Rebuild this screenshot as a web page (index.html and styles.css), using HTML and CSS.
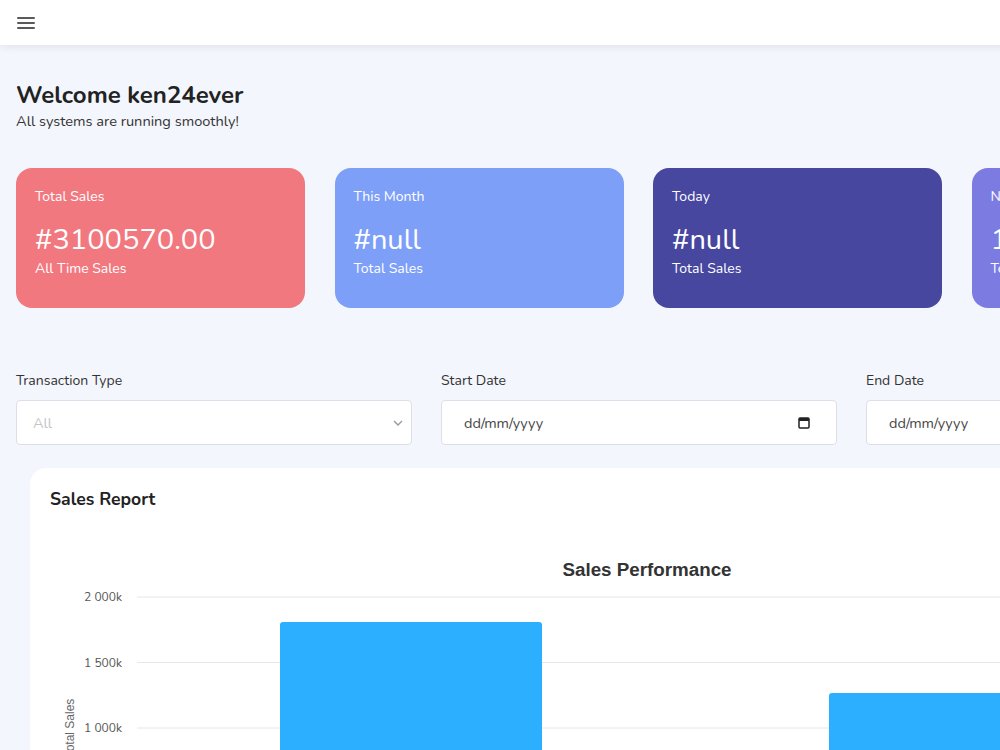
FILE: index.html
```html
<!DOCTYPE html>
<html lang="en">

<head>
    <meta charset="UTF-8">
    <meta name="viewport" content="width=device-width, initial-scale=1.0">
    <title>Dashboard</title>
    <link rel="stylesheet" href="styles.css">
</head>

<body>
    <header class="topbar">
        <button class="menu-btn" aria-label="menu">
            <svg width="18" height="14" viewBox="0 0 18 14">
                <rect x="0" y="1" width="18" height="2" rx="1" fill="#5a5a5a" />
                <rect x="0" y="6" width="18" height="2" rx="1" fill="#5a5a5a" />
                <rect x="0" y="11" width="18" height="2" rx="1" fill="#5a5a5a" />
            </svg>
        </button>
    </header>

    <main class="dashboard">
        <div class="welcome">
            <h2>Welcome ken24ever</h2>
            <p>All systems are running smoothly!</p>
        </div>

        <div class="stat-grid">
            <div class="stat-card coral">
                <div class="stat-label">Total Sales</div>
                <div class="stat-value">#3100570.00</div>
                <div class="stat-sub">All Time Sales</div>
            </div>
            <div class="stat-card sky">
                <div class="stat-label">This Month</div>
                <div class="stat-value">#null</div>
                <div class="stat-sub">Total Sales</div>
            </div>
            <div class="stat-card indigo">
                <div class="stat-label">Today</div>
                <div class="stat-value">#null</div>
                <div class="stat-sub">Total Sales</div>
            </div>
            <div class="stat-card violet">
                <div class="stat-label">No. of Transactions</div>
                <div class="stat-value">1</div>
                <div class="stat-sub">Total</div>
            </div>
        </div>

        <div class="filters">
            <div class="field">
                <label>Transaction Type</label>
                <div class="control select">
                    <span class="placeholder">All</span>
                    <svg width="10" height="6" viewBox="0 0 10 6">
                        <path d="M1 1l4 4 4-4" fill="none" stroke="#9a9a9a" stroke-width="1.4" />
                    </svg>
                </div>
            </div>
            <div class="field">
                <label>Start Date</label>
                <div class="control date">
                    <span>dd/mm/yyyy</span>
                    <svg width="12" height="13" viewBox="0 0 12 13">
                        <rect x="1" y="2" width="10" height="10" rx="1" fill="none" stroke="#222" stroke-width="1.5" />
                        <rect x="1" y="2" width="10" height="3" fill="#222" />
                    </svg>
                </div>
            </div>
            <div class="field">
                <label>End Date</label>
                <div class="control date">
                    <span>dd/mm/yyyy</span>
                    <svg width="12" height="13" viewBox="0 0 12 13">
                        <rect x="1" y="2" width="10" height="10" rx="1" fill="none" stroke="#222" stroke-width="1.5" />
                        <rect x="1" y="2" width="10" height="3" fill="#222" />
                    </svg>
                </div>
            </div>
        </div>

        <div class="report-card">
            <h3>Sales Report</h3>
            <svg class="chart" width="1195" height="400" viewBox="0 0 1195 400">
                <text x="597" y="45" text-anchor="middle" class="chart-title">Sales Performance</text>
                <g stroke="#e6e6e6" stroke-width="1">
                    <line x1="87" y1="66" x2="1185" y2="66" />
                    <line x1="87" y1="131.5" x2="1185" y2="131.5" />
                    <line x1="87" y1="197" x2="1185" y2="197" />
                    <line x1="87" y1="262.5" x2="1185" y2="262.5" />
                    <line x1="87" y1="328" x2="1185" y2="328" />
                </g>
                <g class="axis-label" text-anchor="end">
                    <text x="72" y="70">2 000k</text>
                    <text x="72" y="135.5">1 500k</text>
                    <text x="72" y="201">1 000k</text>
                    <text x="72" y="266.5">500k</text>
                    <text x="72" y="332">0k</text>
                </g>
                <text class="axis-title" transform="translate(24 197) rotate(-90)" text-anchor="middle">Total Sales</text>
                <path d="M230 328V94a3 3 0 0 1 3-3h256a3 3 0 0 1 3 3v234z" fill="#2caffe" />
                <path d="M779 328V165a3 3 0 0 1 3-3h256a3 3 0 0 1 3 3v163z" fill="#2caffe" />
            </svg>
        </div>
    </main>
</body>

</html>
```

FILE: styles.css
```css
* {
    margin: 0;
    padding: 0;
    box-sizing: border-box;
    font-family: 'Nunito', 'Open Sans', sans-serif;
}

html,
body {
    overflow: hidden;
}

body {
    background: #f3f6fc;
    width: 1280px;
}

.topbar {
    background: #fff;
    height: 45px;
    display: flex;
    align-items: center;
    padding: 0 17px;
    box-shadow: 0 2px 8px rgba(0, 0, 0, 0.08);
    position: relative;
}

.menu-btn {
    background: none;
    border: none;
    display: flex;
}

.dashboard {
    padding: 0 16px;
}

.welcome {
    margin-top: 35px;
}

.welcome h2 {
    font-size: 24px;
    line-height: 30px;
    font-weight: 700;
    color: #222;
}

.welcome p {
    font-size: 14.6px;
    line-height: 22px;
    color: #333;
}

.stat-grid {
    display: grid;
    grid-template-columns: repeat(4, 289px);
    gap: 29.5px;
    margin-top: 36px;
}

.stat-card {
    height: 140px;
    border-radius: 16px;
    padding: 19px 19px;
    color: #fff;
}

.coral {
    background: #f2787f;
}

.sky {
    background: #7d9ff8;
}

.indigo {
    background: #47479f;
}

.violet {
    background: #7b7be2;
}

.stat-label {
    font-size: 14px;
    line-height: 20px;
}

.stat-value {
    font-size: 29px;
    line-height: 36px;
    margin-top: 15px;
}

.stat-sub {
    font-size: 14px;
    line-height: 20px;
    margin-top: 1px;
}

.filters {
    display: grid;
    grid-template-columns: repeat(3, 396px);
    gap: 29px;
    margin-top: 63px;
}

.field label {
    display: block;
    font-size: 14px;
    line-height: 20px;
    color: #333;
    margin-bottom: 9px;
}

.control {
    height: 45px;
    background: #fff;
    border: 1px solid #dcdfe6;
    border-radius: 4px;
    display: flex;
    align-items: center;
    justify-content: space-between;
    font-size: 14.5px;
}

.select {
    padding: 0 8px 0 16px;
}

.placeholder {
    color: #c4c4c4;
}

.date {
    padding: 0 26px 0 22px;
    color: #444;
}

.report-card {
    background: #fff;
    border-radius: 16px;
    margin: 23px 0 0 14px;
    padding: 20px 20px 20px;
    width: 1235px;
}

.report-card h3 {
    font-size: 17.6px;
    line-height: 22px;
    font-weight: 700;
    color: #222;
}

.chart {
    display: block;
    margin-top: 21px;
}

.chart-title {
    font-family: 'Liberation Sans', Arial, sans-serif;
    font-size: 18.8px;
    font-weight: 700;
    fill: #333;
}

.axis-label {
    font-family: 'Liberation Sans', Arial, sans-serif;
    font-size: 12px;
    fill: #555;
}

.axis-title {
    font-family: 'Liberation Sans', Arial, sans-serif;
    font-size: 12px;
    fill: #666;
}
```
